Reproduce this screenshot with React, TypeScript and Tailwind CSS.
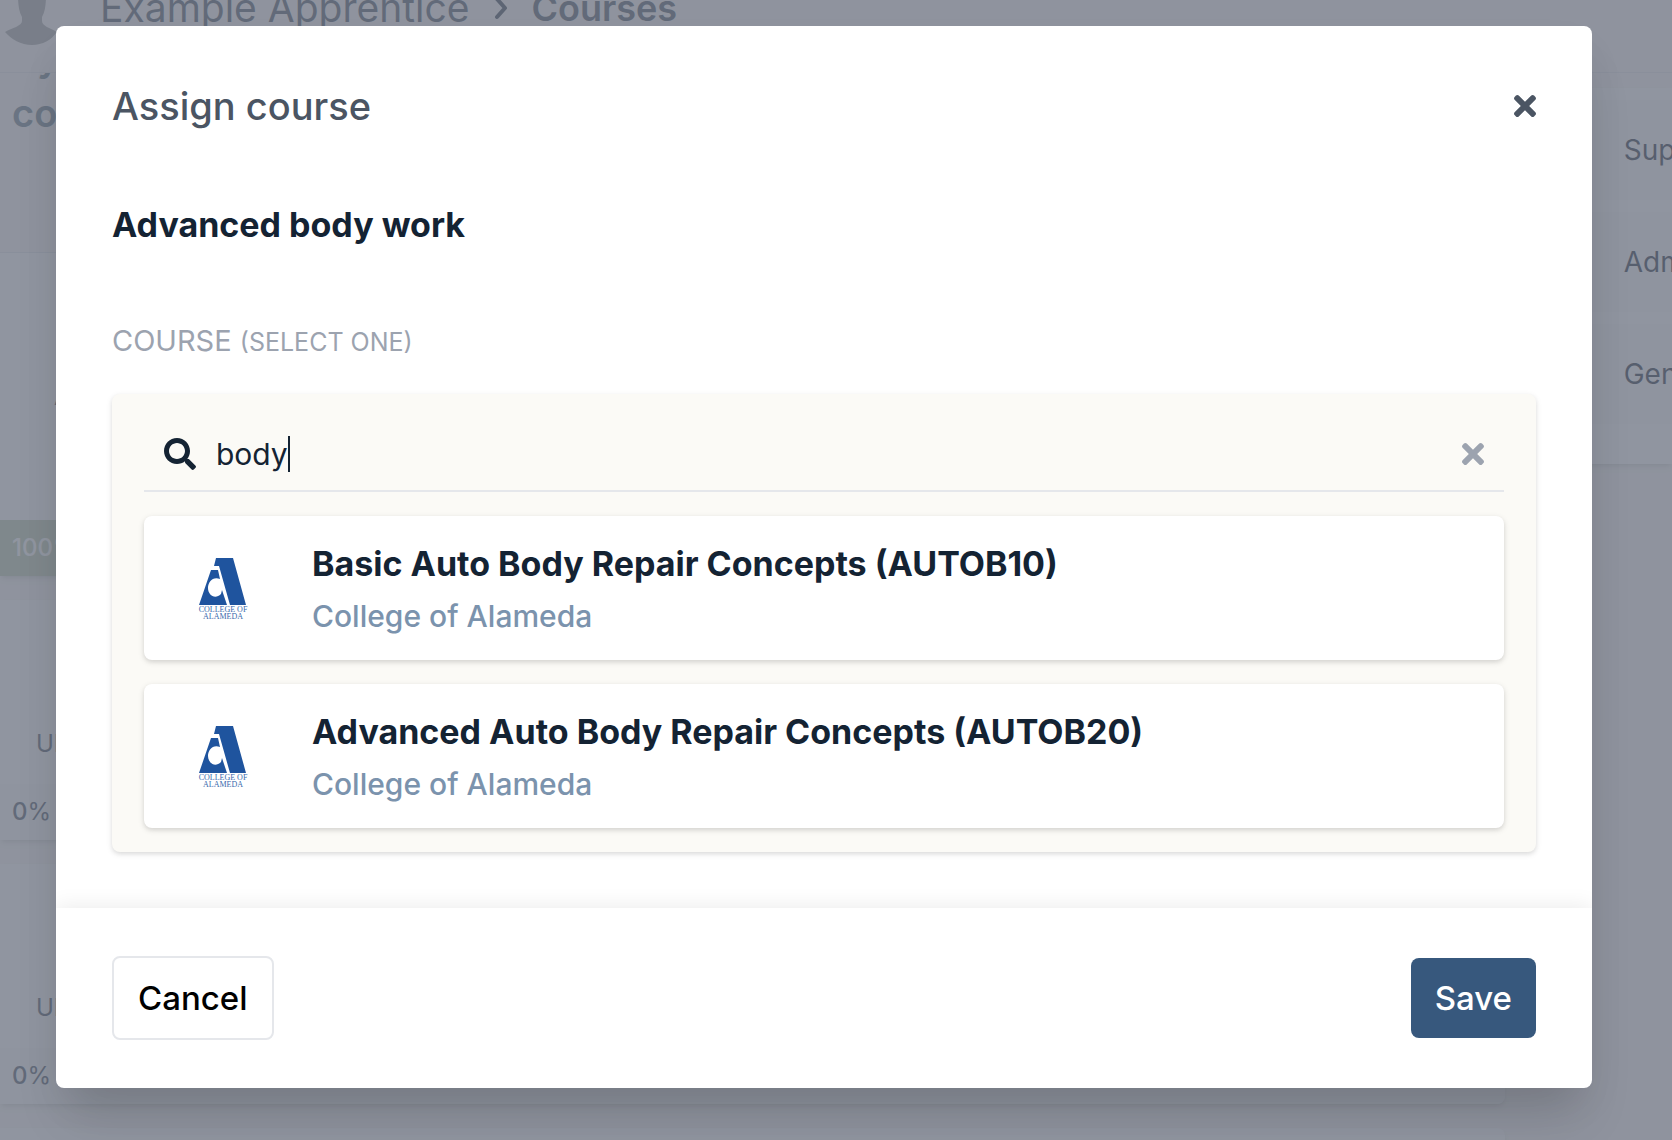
import { useState } from 'react';
import { FaSearch, FaTimes } from 'react-icons/fa';

interface Course {
  code: string;
  name: string;
  school: string;
}

const COURSES: Course[] = [
  { code: 'AUTOB10', name: 'Basic Auto Body Repair Concepts', school: 'College of Alameda' },
  { code: 'AUTOB20', name: 'Advanced Auto Body Repair Concepts', school: 'College of Alameda' },
];

const NAV_ITEMS = ['Supervisor', 'Administrator', 'General'];

function AlamedaLogo() {
  return (
    <svg viewBox="-1 -1 48 62" className="h-[62px] w-12 shrink-0 overflow-visible" aria-hidden="true">
      <g fill="#1f549e">
        <path d="M17 0h17l13 47H31L20 8h-5z" />
        <path d="M12 12h7l2 9c-7-3-12 3-12 9 0 7 7 12 13 6l1-4 5 15H0z" />
      </g>
      <g fill="#3a6aad" fontFamily="Liberation Serif, serif" fontSize="8" textAnchor="middle">
        <text x="24" y="54">COLLEGE OF</text>
        <text x="24" y="61">ALAMEDA</text>
      </g>
    </svg>
  );
}

function Avatar() {
  return (
    <svg viewBox="0 0 64 64" className="h-16 w-16" aria-hidden="true">
      <path
        fill="#a5a5a5"
        d="M18 14h28c0 8-1 16-4 21v4c0 5 8 7 15 11-6 8-14 13-25 13S11 57 5 50c7-4 17-6 17-11v-4c-3-5-4-13-4-21z"
      />
    </svg>
  );
}

function ProgressCard() {
  return (
    <div className="overflow-hidden rounded-r-lg bg-white shadow-md">
      <div className="flex h-[184px] items-end pb-5 pl-9 text-2xl leading-10 text-gray-600">UNITS</div>
      <div className="h-14 bg-[#f9fafb] pl-3 text-2xl leading-[56px] text-gray-600">
        <span className="font-medium">0</span>%
      </div>
    </div>
  );
}

function ApprenticePage() {
  return (
    <div className="flex h-full flex-col overflow-hidden bg-[#f9f8f5]">
      <header className="flex h-[73px] shrink-0 items-start overflow-hidden border-b border-gray-200 bg-[#f9f8f5]">
        <div className="-mt-[18px] flex items-start">
          <Avatar />
          <nav className="mt-[2px] flex items-center gap-6 pl-9 text-[39px] leading-[48px] text-gray-600">
            <a href="#apprentice">Example Apprentice</a>
            <svg
              viewBox="0 0 14 24"
              className="h-6 w-[14px]"
              fill="none"
              stroke="#374151"
              strokeWidth="4"
              strokeLinecap="round"
              strokeLinejoin="round"
            >
              <path d="M3 3l8 9-8 9" />
            </svg>
            <a href="#courses" className="text-[36px] font-semibold">Courses</a>
          </nav>
        </div>
      </header>
      <main className="flex min-h-0 flex-1 items-start justify-between overflow-hidden">
        <div className="w-[90%] shrink-0">
          <div className="h-[180px] overflow-hidden border-b border-gray-200 pl-3">
            <h1 className="-mt-11 text-[38px] leading-[56px] font-semibold text-[#687e8c]">
              By
              <br />
              course
            </h1>
          </div>
          <div className="flex flex-col gap-6">
            <div className="bg-white shadow-md">
              <div className="flex h-[267px] items-center pt-5 pl-[54px] text-2xl text-gray-600">Auto</div>
              <div className="h-14 bg-[#bccab0] pl-3 text-2xl leading-[56px] font-medium text-white">100%</div>
            </div>
            <ProgressCard />
            <ProgressCard />
            <ProgressCard />
          </div>
        </div>
        <ul className="mt-[15px] flex w-[6%] flex-col gap-3 overflow-hidden bg-white pt-3 pb-10 shadow-md">
          {NAV_ITEMS.map((item) => (
            <li key={item} className="bg-[#f9fafb] pl-[52px] text-[28px] leading-[100px] text-gray-800">
              {item}
            </li>
          ))}
        </ul>
      </main>
    </div>
  );
}

function CourseOption({ course }: { course: Course }) {
  return (
    <button
      type="button"
      className="flex h-36 w-full items-center rounded-lg bg-white pr-8 pl-[54px] text-left shadow-[0_2px_6px_rgba(0,0,0,0.12),0_2px_4px_rgba(0,0,0,0.06)]"
    >
      <AlamedaLogo />
      <span className="flex flex-col gap-2 pl-[66px]">
        <span className="text-[34px] leading-[48px] font-bold text-[#142333]">
          {course.name} ({course.code})
        </span>
        <span className="text-[30px] leading-10 font-medium text-[#7b93ad]">{course.school}</span>
      </span>
    </button>
  );
}

export default function App() {
  const [query, setQuery] = useState('body');

  const matches = COURSES.filter((c) => c.name.toLowerCase().includes(query.toLowerCase()));

  return (
    <div className="relative h-screen overflow-hidden font-[Inter,sans-serif]">
      <ApprenticePage />
      <div className="absolute inset-0 bg-[#6b7280]/75 pt-[26px] pr-20 pl-14">
        <div
          role="dialog"
          aria-label="Assign course"
          className="overflow-hidden rounded-lg bg-white shadow-[0_40px_50px_-10px_rgba(0,0,0,0.1),0_20px_40px_-10px_rgba(0,0,0,0.1)]"
        >
          <div className="px-14 pt-14 pb-14">
            <div className="flex items-center justify-between">
              <h2 className="text-[38px] leading-[48px] font-medium text-[#4b5563]">Assign course</h2>
              <button type="button" aria-label="Close" className="text-[#4b5563]">
                <FaTimes className="h-8 w-[22px]" />
              </button>
            </div>
            <h3 className="mt-[71px] text-[34px] leading-[48px] font-bold text-[#142333]">Advanced body work</h3>
            <label htmlFor="course-search" className="mt-[72px] block text-[29px] leading-10 text-[#9ca3af]">
              COURSE <span className="text-[25px]">(SELECT ONE)</span>
            </label>
            <div className="mt-8 rounded-lg bg-[#fbfaf6] px-8 pt-6 pb-6 shadow-[0_2px_6px_rgba(0,0,0,0.1),0_2px_4px_rgba(0,0,0,0.06)]">
              <div className="flex h-[74px] items-center border-b-2 border-[#e5e7eb] px-5">
                <FaSearch className="h-8 w-8 text-[#142333]" />
                <input
                  id="course-search"
                  type="text"
                  value={query}
                  onChange={(e) => setQuery(e.target.value)}
                  className="ml-5 bg-transparent text-[30px] leading-10 text-[#142333] caret-transparent outline-none [field-sizing:content]"
                />
                <span className="h-9 w-[2px] bg-[#142333]" />
                <button
                  type="button"
                  aria-label="Clear search"
                  onClick={() => setQuery('')}
                  className="ml-auto text-[#9ca3af]"
                >
                  <FaTimes className="h-8 w-[22px]" />
                </button>
              </div>
              <div className="mt-6 flex flex-col gap-6">
                {matches.map((course) => (
                  <CourseOption key={course.code} course={course} />
                ))}
              </div>
            </div>
          </div>
          <div className="flex items-center justify-between px-14 py-12 shadow-[0_-2px_20px_rgba(0,0,0,0.08)]">
            <button
              type="button"
              className="h-[84px] rounded-lg border-2 border-[#e5e7eb] px-6 text-[33px] leading-[48px] font-medium text-black"
            >
              Cancel
            </button>
            <button type="button" className="h-20 rounded-lg bg-[#37587d] px-6 text-[33px] leading-[48px] font-medium text-white">
              Save
            </button>
          </div>
        </div>
      </div>
    </div>
  );
}
